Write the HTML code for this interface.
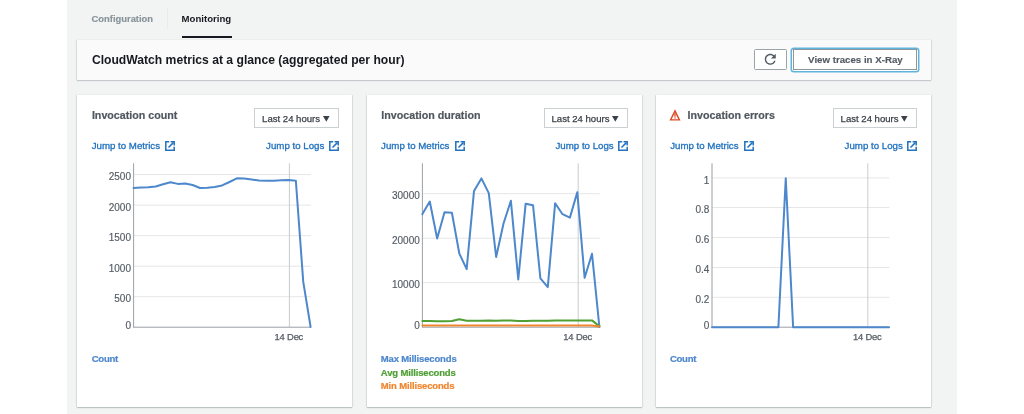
<!DOCTYPE html>
<html><head><meta charset="utf-8"><style>
html,body{margin:0;padding:0;width:1024px;height:414px;overflow:hidden;background:#fff;font-family:"Liberation Sans", sans-serif;}
.t{position:absolute;white-space:nowrap;}
.bg{position:absolute;left:67px;top:0;width:889.5px;height:414px;background:#f2f3f3;}
.hdr{position:absolute;left:77.3px;top:39.8px;width:853.7px;height:40.2px;background:#fafafa;box-shadow:0 1px 1px 0 rgba(0,28,36,.17),1px 0 1px 0 rgba(0,28,36,.07),-1px 0 1px 0 rgba(0,28,36,.07);}
.card{position:absolute;top:94.6px;width:275px;height:312.3px;background:#fff;box-shadow:0 1px 1px 0 rgba(0,28,36,.2),1px 0 1px 0 rgba(0,28,36,.07),-1px 0 1px 0 rgba(0,28,36,.07);}
</style></head><body>
<div id="wrap" style="position:absolute;left:0;top:0;width:1024px;height:414px;filter:blur(0.4px)"><div class="bg"></div>
<div class="t" style="left:91.60px;top:13.94px;font-size:9.4px;line-height:9.4px;font-weight:700;color:#87949a;-webkit-text-stroke:0.15px #87949a;">Configuration</div>
<div class="t" style="left:181.60px;top:13.77px;font-size:9.6px;line-height:9.6px;font-weight:700;color:#16191f;">Monitoring</div>
<div style="position:absolute;left:181.5px;top:35.5px;width:50.5px;height:2.7px;background:#16191f"></div>
<div style="position:absolute;left:167px;top:8px;width:1px;height:21px;background:#e9ebeb"></div>
<div class="hdr"></div>
<div class="t" style="left:91.90px;top:54.22px;font-size:12.15px;line-height:12.15px;font-weight:700;color:#16191f;">CloudWatch metrics at a glance (aggregated per hour)</div>
<div style="position:absolute;left:753.6px;top:49.3px;width:31.5px;height:18.4px;border:1px solid #9aa3a6;border-radius:1.5px;background:#fff"></div>
<svg style="position:absolute;left:761.9px;top:51.2px" width="16.5" height="16.5" viewBox="0 0 24 24"><path d="M17.65 6.35C16.2 4.9 14.21 4 12 4c-4.42 0-7.99 3.58-7.99 8s3.57 8 7.99 8c3.73 0 6.84-2.55 7.73-6h-2.08c-.82 2.33-3.040 4-5.65 4-3.31 0-6-2.69-6-6s2.69-6 6-6c1.66 0 3.14.69 4.22 1.780L13 11h7V4l-2.35 2.350z" fill="#545b64"/></svg>
<div style="position:absolute;box-sizing:border-box;left:792.4px;top:48.5px;width:125.8px;height:22.8px;box-shadow:0 0 0 1.5px #5fb4de;border-radius:2px;background:#fff"></div>
<div style="position:absolute;box-sizing:border-box;left:793.3px;top:49.2px;width:123.9px;height:20.6px;border:1px solid #8d9699;background:#fff"></div>
<div class="t" style="left:808.10px;top:55.09px;font-size:9.7px;line-height:9.7px;font-weight:700;color:#545b64;-webkit-text-stroke:0.15px #545b64;">View traces in X-Ray</div>
<div class="card" style="left:77.4px"></div>
<div class="t" style="left:91.90px;top:110.24px;font-size:10.7px;line-height:10.7px;font-weight:700;color:#50575f;-webkit-text-stroke:0.2px #50575f;">Invocation count</div>
<div style="position:absolute;left:254.20000000000002px;top:108.3px;width:82.5px;height:18.2px;border:1px solid #cbd0d2;background:#fff"></div>
<div class="t" style="left:262.10px;top:113.80px;font-size:9.57px;line-height:9.57px;font-weight:400;color:#3b4148;-webkit-text-stroke:0.25px #3b4148;">Last 24 hours</div>
<svg style="position:absolute;left:322.6px;top:116.2px" width="7" height="6" viewBox="0 0 7 6"><path d="M0 0 L6.6 0 L3.3 5.7 Z" fill="#3b4148"/></svg>
<div class="t" style="left:91.70px;top:141.29px;font-size:9.7px;line-height:9.7px;font-weight:400;color:#2272be;-webkit-text-stroke:0.3px #2272be;">Jump to Metrics</div>
<svg style="position:absolute;left:165.4px;top:141.4px" width="10" height="10" viewBox="0 0 10 10"><path d="M4.2 0.8 H0.8 V9.2 H9.2 V5.8" fill="none" stroke="#2272be" stroke-width="1.5"/><path d="M3.5 6.5 L8.4 1.6" stroke="#2272be" stroke-width="1.5"/><path d="M5.6 0.8 H9.2 V4.4" fill="none" stroke="#2272be" stroke-width="1.5"/></svg>
<div class="t" style="left:266.10px;top:141.29px;font-size:9.7px;line-height:9.7px;font-weight:400;color:#2272be;-webkit-text-stroke:0.3px #2272be;">Jump to Logs</div>
<svg style="position:absolute;left:328.9px;top:141.4px" width="10" height="10" viewBox="0 0 10 10"><path d="M4.2 0.8 H0.8 V9.2 H9.2 V5.8" fill="none" stroke="#2272be" stroke-width="1.5"/><path d="M3.5 6.5 L8.4 1.6" stroke="#2272be" stroke-width="1.5"/><path d="M5.6 0.8 H9.2 V4.4" fill="none" stroke="#2272be" stroke-width="1.5"/></svg>
<div class="card" style="left:366.8px"></div>
<div class="t" style="left:381.30px;top:110.24px;font-size:10.7px;line-height:10.7px;font-weight:700;color:#50575f;-webkit-text-stroke:0.2px #50575f;">Invocation duration</div>
<div style="position:absolute;left:543.6px;top:108.3px;width:82.5px;height:18.2px;border:1px solid #cbd0d2;background:#fff"></div>
<div class="t" style="left:551.50px;top:113.80px;font-size:9.57px;line-height:9.57px;font-weight:400;color:#3b4148;-webkit-text-stroke:0.25px #3b4148;">Last 24 hours</div>
<svg style="position:absolute;left:612.0px;top:116.2px" width="7" height="6" viewBox="0 0 7 6"><path d="M0 0 L6.6 0 L3.3 5.7 Z" fill="#3b4148"/></svg>
<div class="t" style="left:381.10px;top:141.29px;font-size:9.7px;line-height:9.7px;font-weight:400;color:#2272be;-webkit-text-stroke:0.3px #2272be;">Jump to Metrics</div>
<svg style="position:absolute;left:454.8px;top:141.4px" width="10" height="10" viewBox="0 0 10 10"><path d="M4.2 0.8 H0.8 V9.2 H9.2 V5.8" fill="none" stroke="#2272be" stroke-width="1.5"/><path d="M3.5 6.5 L8.4 1.6" stroke="#2272be" stroke-width="1.5"/><path d="M5.6 0.8 H9.2 V4.4" fill="none" stroke="#2272be" stroke-width="1.5"/></svg>
<div class="t" style="left:555.50px;top:141.29px;font-size:9.7px;line-height:9.7px;font-weight:400;color:#2272be;-webkit-text-stroke:0.3px #2272be;">Jump to Logs</div>
<svg style="position:absolute;left:618.3px;top:141.4px" width="10" height="10" viewBox="0 0 10 10"><path d="M4.2 0.8 H0.8 V9.2 H9.2 V5.8" fill="none" stroke="#2272be" stroke-width="1.5"/><path d="M3.5 6.5 L8.4 1.6" stroke="#2272be" stroke-width="1.5"/><path d="M5.6 0.8 H9.2 V4.4" fill="none" stroke="#2272be" stroke-width="1.5"/></svg>
<div class="card" style="left:655.9px"></div>
<svg style="position:absolute;left:669.4px;top:109px" width="12" height="12" viewBox="0 0 12 12"><path d="M6 1.9 L10.4 10.9 L1.6 10.9 Z" fill="none" stroke="#dc4a25" stroke-width="1.4" stroke-linejoin="miter"/><rect x="5.35" y="4.2" width="1.3" height="3.6" fill="#dc4a25"/><rect x="5.35" y="8.4" width="1.3" height="1.2" fill="#dc4a25"/></svg>
<div class="t" style="left:687.60px;top:110.24px;font-size:10.7px;line-height:10.7px;font-weight:700;color:#50575f;-webkit-text-stroke:0.2px #50575f;">Invocation errors</div>
<div style="position:absolute;left:832.7px;top:108.3px;width:82.5px;height:18.2px;border:1px solid #cbd0d2;background:#fff"></div>
<div class="t" style="left:840.60px;top:113.80px;font-size:9.57px;line-height:9.57px;font-weight:400;color:#3b4148;-webkit-text-stroke:0.25px #3b4148;">Last 24 hours</div>
<svg style="position:absolute;left:901.1px;top:116.2px" width="7" height="6" viewBox="0 0 7 6"><path d="M0 0 L6.6 0 L3.3 5.7 Z" fill="#3b4148"/></svg>
<div class="t" style="left:670.20px;top:141.29px;font-size:9.7px;line-height:9.7px;font-weight:400;color:#2272be;-webkit-text-stroke:0.3px #2272be;">Jump to Metrics</div>
<svg style="position:absolute;left:743.9px;top:141.4px" width="10" height="10" viewBox="0 0 10 10"><path d="M4.2 0.8 H0.8 V9.2 H9.2 V5.8" fill="none" stroke="#2272be" stroke-width="1.5"/><path d="M3.5 6.5 L8.4 1.6" stroke="#2272be" stroke-width="1.5"/><path d="M5.6 0.8 H9.2 V4.4" fill="none" stroke="#2272be" stroke-width="1.5"/></svg>
<div class="t" style="left:844.60px;top:141.29px;font-size:9.7px;line-height:9.7px;font-weight:400;color:#2272be;-webkit-text-stroke:0.3px #2272be;">Jump to Logs</div>
<svg style="position:absolute;left:907.4px;top:141.4px" width="10" height="10" viewBox="0 0 10 10"><path d="M4.2 0.8 H0.8 V9.2 H9.2 V5.8" fill="none" stroke="#2272be" stroke-width="1.5"/><path d="M3.5 6.5 L8.4 1.6" stroke="#2272be" stroke-width="1.5"/><path d="M5.6 0.8 H9.2 V4.4" fill="none" stroke="#2272be" stroke-width="1.5"/></svg>
<div class="t" style="right:893.00px;top:320.74px;font-size:10px;line-height:10px;font-weight:400;color:#545b64;-webkit-text-stroke:0.15px #545b64;">0</div>
<div class="t" style="right:893.00px;top:294.44px;font-size:10px;line-height:10px;font-weight:400;color:#545b64;-webkit-text-stroke:0.15px #545b64;">500</div>
<div class="t" style="right:893.00px;top:263.94px;font-size:10px;line-height:10px;font-weight:400;color:#545b64;-webkit-text-stroke:0.15px #545b64;">1000</div>
<div class="t" style="right:893.00px;top:233.43px;font-size:10px;line-height:10px;font-weight:400;color:#545b64;-webkit-text-stroke:0.15px #545b64;">1500</div>
<div class="t" style="right:893.00px;top:202.93px;font-size:10px;line-height:10px;font-weight:400;color:#545b64;-webkit-text-stroke:0.15px #545b64;">2000</div>
<div class="t" style="right:893.00px;top:172.33px;font-size:10px;line-height:10px;font-weight:400;color:#545b64;-webkit-text-stroke:0.15px #545b64;">2500</div>
<div class="t" style="left:238.80px;width:100px;text-align:center;top:332.14px;font-size:9.4px;line-height:9.4px;font-weight:400;color:#545b64;letter-spacing:-0.25px;word-spacing:0.3px;-webkit-text-stroke:0.25px #545b64;">14 Dec</div>
<svg style="position:absolute;left:0;top:0" width="1024" height="414" viewBox="0 0 1024 414"><line x1="133.6" y1="296.7" x2="311.0" y2="296.7" stroke="#e6e6e6" stroke-width="1"/><line x1="133.6" y1="266.2" x2="311.0" y2="266.2" stroke="#e6e6e6" stroke-width="1"/><line x1="133.6" y1="235.7" x2="311.0" y2="235.7" stroke="#e6e6e6" stroke-width="1"/><line x1="133.6" y1="205.2" x2="311.0" y2="205.2" stroke="#e6e6e6" stroke-width="1"/><line x1="133.6" y1="174.6" x2="311.0" y2="174.6" stroke="#e6e6e6" stroke-width="1"/><line x1="289.4" y1="163.3" x2="289.4" y2="327.2" stroke="#c9cccf" stroke-width="1"/><line x1="133.6" y1="163.3" x2="133.6" y2="327.7" stroke="#9aa0a6" stroke-width="1"/><line x1="133.6" y1="327.2" x2="311.0" y2="327.2" stroke="#9aa0a6" stroke-width="1"/><polyline points="133.60,188.00 140.97,187.60 148.35,187.20 155.72,186.50 163.10,184.20 170.47,182.20 177.85,183.90 185.22,183.60 192.60,185.00 199.97,188.00 207.35,187.80 214.72,187.00 222.10,185.40 229.47,182.00 236.85,178.30 244.22,178.40 251.60,179.50 258.98,180.60 266.35,180.70 273.73,180.70 281.10,180.30 288.48,179.90 295.85,180.70 303.23,281.60 310.60,327.00" fill="none" stroke="#4d87cc" stroke-width="2" stroke-linejoin="round" stroke-linecap="round"/></svg>
<div class="t" style="right:604.20px;top:320.74px;font-size:10px;line-height:10px;font-weight:400;color:#545b64;-webkit-text-stroke:0.15px #545b64;">0</div>
<div class="t" style="right:604.20px;top:280.44px;font-size:10px;line-height:10px;font-weight:400;color:#545b64;-webkit-text-stroke:0.15px #545b64;">10000</div>
<div class="t" style="right:604.20px;top:235.93px;font-size:10px;line-height:10px;font-weight:400;color:#545b64;-webkit-text-stroke:0.15px #545b64;">20000</div>
<div class="t" style="right:604.20px;top:191.43px;font-size:10px;line-height:10px;font-weight:400;color:#545b64;-webkit-text-stroke:0.15px #545b64;">30000</div>
<div class="t" style="left:527.60px;width:100px;text-align:center;top:332.14px;font-size:9.4px;line-height:9.4px;font-weight:400;color:#545b64;letter-spacing:-0.25px;word-spacing:0.3px;-webkit-text-stroke:0.25px #545b64;">14 Dec</div>
<svg style="position:absolute;left:0;top:0" width="1024" height="414" viewBox="0 0 1024 414"><line x1="422.4" y1="282.7" x2="599.8" y2="282.7" stroke="#e6e6e6" stroke-width="1"/><line x1="422.4" y1="238.2" x2="599.8" y2="238.2" stroke="#e6e6e6" stroke-width="1"/><line x1="422.4" y1="193.7" x2="599.8" y2="193.7" stroke="#e6e6e6" stroke-width="1"/><line x1="578.2" y1="163.3" x2="578.2" y2="327.2" stroke="#c9cccf" stroke-width="1"/><line x1="422.4" y1="163.3" x2="422.4" y2="327.7" stroke="#9aa0a6" stroke-width="1"/><line x1="422.4" y1="327.2" x2="599.8" y2="327.2" stroke="#9aa0a6" stroke-width="1"/><polyline points="422.40,214.10 429.77,201.50 437.15,238.50 444.52,212.30 451.90,212.80 459.27,253.30 466.65,269.10 474.02,190.90 481.40,178.40 488.77,193.10 496.15,257.00 503.52,223.50 510.90,200.80 518.27,279.50 525.65,203.70 533.02,205.20 540.40,278.40 547.77,287.10 555.15,203.20 562.52,214.20 569.90,217.60 577.27,192.20 584.65,277.80 592.02,253.80 599.40,327.00" fill="none" stroke="#4d87cc" stroke-width="2" stroke-linejoin="round" stroke-linecap="round"/><polyline points="422.40,321.00 429.77,321.00 437.15,321.20 444.52,321.30 451.90,321.00 459.27,319.30 466.65,320.80 474.02,320.80 481.40,320.80 488.77,320.60 496.15,320.80 503.52,320.60 510.90,320.60 518.27,321.00 525.65,321.00 533.02,320.80 540.40,320.80 547.77,320.80 555.15,320.60 562.52,320.40 569.90,320.40 577.27,320.40 584.65,320.40 592.02,320.40 599.40,326.20" fill="none" stroke="#4e9f34" stroke-width="2" stroke-linejoin="round" stroke-linecap="round"/><polyline points="422.40,325.60 429.77,325.60 437.15,325.60 444.52,325.60 451.90,325.60 459.27,325.60 466.65,325.60 474.02,325.60 481.40,325.60 488.77,325.60 496.15,325.60 503.52,325.60 510.90,325.60 518.27,325.60 525.65,325.60 533.02,325.60 540.40,325.60 547.77,325.60 555.15,325.60 562.52,325.60 569.90,325.60 577.27,325.60 584.65,325.60 592.02,325.60 599.40,326.40" fill="none" stroke="#ef8630" stroke-width="2" stroke-linejoin="round" stroke-linecap="round"/></svg>
<div class="t" style="right:314.60px;top:320.74px;font-size:10px;line-height:10px;font-weight:400;color:#545b64;-webkit-text-stroke:0.15px #545b64;">0</div>
<div class="t" style="right:314.60px;top:295.04px;font-size:10px;line-height:10px;font-weight:400;color:#545b64;-webkit-text-stroke:0.15px #545b64;">0.2</div>
<div class="t" style="right:314.60px;top:265.24px;font-size:10px;line-height:10px;font-weight:400;color:#545b64;-webkit-text-stroke:0.15px #545b64;">0.4</div>
<div class="t" style="right:314.60px;top:235.23px;font-size:10px;line-height:10px;font-weight:400;color:#545b64;-webkit-text-stroke:0.15px #545b64;">0.6</div>
<div class="t" style="right:314.60px;top:205.23px;font-size:10px;line-height:10px;font-weight:400;color:#545b64;-webkit-text-stroke:0.15px #545b64;">0.8</div>
<div class="t" style="right:314.60px;top:175.63px;font-size:10px;line-height:10px;font-weight:400;color:#545b64;-webkit-text-stroke:0.15px #545b64;">1</div>
<div class="t" style="left:817.20px;width:100px;text-align:center;top:332.14px;font-size:9.4px;line-height:9.4px;font-weight:400;color:#545b64;letter-spacing:-0.25px;word-spacing:0.3px;-webkit-text-stroke:0.25px #545b64;">14 Dec</div>
<svg style="position:absolute;left:0;top:0" width="1024" height="414" viewBox="0 0 1024 414"><line x1="712.0" y1="297.3" x2="889.4" y2="297.3" stroke="#e6e6e6" stroke-width="1"/><line x1="712.0" y1="267.5" x2="889.4" y2="267.5" stroke="#e6e6e6" stroke-width="1"/><line x1="712.0" y1="237.5" x2="889.4" y2="237.5" stroke="#e6e6e6" stroke-width="1"/><line x1="712.0" y1="207.5" x2="889.4" y2="207.5" stroke="#e6e6e6" stroke-width="1"/><line x1="712.0" y1="177.9" x2="889.4" y2="177.9" stroke="#e6e6e6" stroke-width="1"/><line x1="867.8" y1="163.3" x2="867.8" y2="327.2" stroke="#c9cccf" stroke-width="1"/><line x1="712.0" y1="163.3" x2="712.0" y2="327.7" stroke="#9aa0a6" stroke-width="1"/><line x1="712.0" y1="327.2" x2="889.4" y2="327.2" stroke="#9aa0a6" stroke-width="1"/><polyline points="712.00,327.20 719.38,327.20 726.75,327.20 734.12,327.20 741.50,327.20 748.88,327.20 756.25,327.20 763.62,327.20 771.00,327.20 778.38,327.20 785.75,178.30 793.12,327.20 800.50,327.20 807.88,327.20 815.25,327.20 822.62,327.20 830.00,327.20 837.38,327.20 844.75,327.20 852.12,327.20 859.50,327.20 866.88,327.20 874.25,327.20 881.62,327.20 889.00,327.20" fill="none" stroke="#4d87cc" stroke-width="2" stroke-linejoin="round" stroke-linecap="round"/></svg>
<div class="t" style="left:91.70px;top:354.07px;font-size:9.6px;line-height:9.6px;font-weight:700;color:#4d87cc;letter-spacing:-0.3px;-webkit-text-stroke:0.2px currentColor;">Count</div>
<div class="t" style="left:380.80px;top:354.06px;font-size:9.5px;line-height:9.5px;font-weight:700;color:#4d87cc;letter-spacing:-0.15px;-webkit-text-stroke:0.2px currentColor;">Max Milliseconds</div>
<div class="t" style="left:380.80px;top:367.86px;font-size:9.5px;line-height:9.5px;font-weight:700;color:#4e9f34;letter-spacing:-0.15px;-webkit-text-stroke:0.2px currentColor;">Avg Milliseconds</div>
<div class="t" style="left:380.80px;top:381.36px;font-size:9.5px;line-height:9.5px;font-weight:700;color:#ef8630;letter-spacing:-0.15px;-webkit-text-stroke:0.2px currentColor;">Min Milliseconds</div>
<div class="t" style="left:669.90px;top:354.07px;font-size:9.6px;line-height:9.6px;font-weight:700;color:#4d87cc;letter-spacing:-0.3px;-webkit-text-stroke:0.2px currentColor;">Count</div>
</div>
</body></html>
